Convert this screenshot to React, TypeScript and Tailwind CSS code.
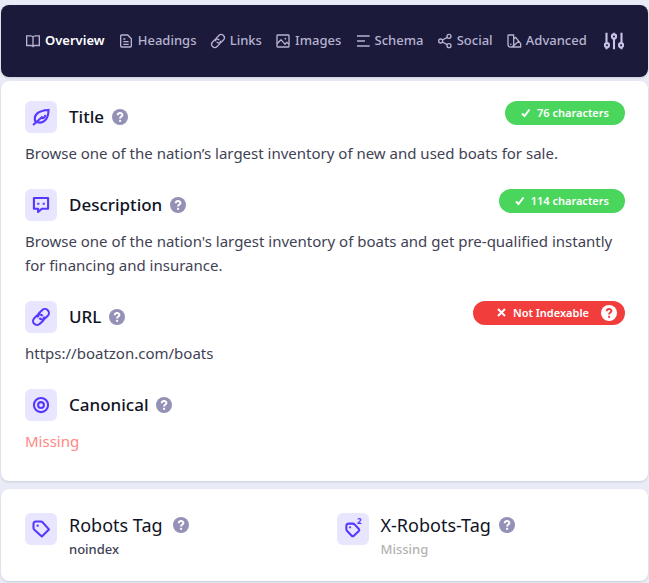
import type { ReactNode } from "react";

type IconProps = { className?: string; width?: number; children: ReactNode };

function Icon({ className = "size-4", width = 2, children }: IconProps) {
  return (
    <svg viewBox="0 0 24 24" aria-hidden="true" fill="none" stroke="currentColor" strokeWidth={width} className={`shrink-0 ${className}`}>
      {children}
    </svg>
  );
}

const linkShape = (
  <path d="M10 13.200a4.800 4.800 0 0 0 7.100.4l3-3a4.800 4.800 0 0 0-6.800-6.800L9.800 7.300a4.800 4.800 0 0 0-1 5.200M14 10.800a4.800 4.800 0 0 0-7.100-.4l-3 3a4.800 4.800 0 0 0 6.800 6.800l3.500-3.500a4.800 4.800 0 0 0 1-5.200" />
);

const tabs: { label: string; icon: ReactNode }[] = [
  { label: "Overview", icon: <path d="M12 5v15M12 6c-.8-1.300-2-1.800-3.500-1.800H2.500v14.500H9c1.500 0 2.500.4 3 1.300.5-.9 1.500-1.300 3-1.300h6.500V4.200h-6C14 4.200 12.800 4.700 12 6z" /> },
  { label: "Headings", icon: <><path d="M5.500 3h9L20 8.500V19.500a1.500 1.500 0 0 1-1.500 1.500h-13A1.500 1.500 0 0 1 4 19.500v-15A1.500 1.500 0 0 1 5.500 3z" /><path d="M8 9h3M8 13h8M8 17h8" /></> },
  { label: "Links", icon: linkShape },
  { label: "Images", icon: <><rect x="3" y="3" width="18" height="18" rx="1" /><path d="m3 16 6-6 6 7 2.500-3L21 17" /><circle cx="15.500" cy="8.500" r="1.300" fill="currentColor" stroke="none" /></> },
  { label: "Schema", icon: <path d="M3 4.500h19M3 12h12M3 19.500h19" /> },
  { label: "Social", icon: <><circle cx="5.500" cy="12" r="3" /><circle cx="18" cy="5" r="3" /><circle cx="18" cy="19" r="3" /><path d="m8 10.500 7.500-4M8 13.500l7.500 4" /></> },
  { label: "Advanced", icon: <><path d="M4 3h7.500v14a4 4 0 0 1-8.500 0V4a1 1 0 0 1 1-1zM7.500 21H22v-5L14.500 6.500l-3 2.500M11 19.500l8-7" strokeLinejoin="round" /><circle cx="7.300" cy="17" r="1.200" fill="currentColor" stroke="none" /></> },
];

function HelpButton({ label, className = "bg-[#9391b5] text-white" }: { label: string; className?: string }) {
  return (
    <button type="button" aria-label={label} className={`flex size-4 shrink-0 items-center justify-center rounded-full ${className}`}>
      <svg viewBox="0 0 16 16" aria-hidden="true" fill="none" stroke="currentColor" strokeWidth="2" className="size-4">
        <path d="M5.700 6.300C5.700 3.200 10.400 3.300 10.400 5.900 10.400 7.600 8.100 7.500 8.100 9.500" />
        <path d="M8.100 10.800v2" />
      </svg>
    </button>
  );
}

function IconTile({ children }: { children: ReactNode }) {
  return <span className="relative flex size-8 shrink-0 items-center justify-center rounded-md bg-[#e8e5ff] text-[#5438ff]">{children}</span>;
}

function CountBadge({ text }: { text: string }) {
  return (
    <span className="flex h-6 items-center gap-1.5 rounded-full bg-[#4ad65d] px-4 text-[11px] font-semibold text-white">
      <svg viewBox="0 0 10 10" aria-hidden="true" fill="none" stroke="currentColor" strokeWidth="2" className="size-2.5">
        <path d="m1 5.500 2.500 2.500L8.500 1.500" />
      </svg>
      {text}
    </span>
  );
}

function Section({ title, icon, badge, children, tone = "text-[#3f4254]" }: { title: string; icon: ReactNode; badge?: ReactNode; children: ReactNode; tone?: string }) {
  return (
    <section>
      <div className="flex h-8 items-start justify-between">
        <div className="flex items-center">
          <IconTile>{icon}</IconTile>
          <h2 className="ml-3 text-[17px] font-medium text-[#101424]">{title}</h2>
          <span className="ml-2"><HelpButton label={`About ${title}`} /></span>
        </div>
        {badge}
      </div>
      <p className={`mt-2 text-[15px] leading-6 ${tone}`}>{children}</p>
    </section>
  );
}

export default function App() {
  return (
    <main className="flex min-h-screen flex-col gap-1 bg-[#e9ecf6] px-px pt-[5px] font-['Noto_Sans',sans-serif]">
      <nav className="flex h-[72px] items-center justify-between rounded-lg bg-[#1b1a3a] px-6 text-[#b7b3d0] shadow-sm">
        {tabs.map((tab, i) => (
          <a key={tab.label} href="#" className={`flex items-center gap-1 text-[13px] ${i === 0 ? "font-semibold text-white" : "font-medium"}`}>
            <Icon className="size-4 text-[#b7b3d0]">{tab.icon}</Icon>
            {tab.label}
          </a>
        ))}
        <button type="button" aria-label="Settings" className="pl-1 text-[#c9c5ea]">
          <Icon className="size-5" width={2.5}>
            <path d="M3 2v12M3 20v2M12 2v1M12 9v13M21 2v12M21 20v2" />
            <circle cx="3.500" cy="17" r="2.500" /><circle cx="12" cy="6.500" r="2.500" /><circle cx="20.500" cy="17" r="2.500" />
          </Icon>
        </button>
      </nav>

      <div className="flex flex-col gap-6 rounded-lg bg-white pt-5 pr-[23px] pb-7 pl-6 shadow-sm">
        <Section
          title="Title"
          badge={<CountBadge text="76 characters" />}
          icon={<Icon className="size-5" width={2.5}><path d="M2.500 21.500 14 11.500M5.500 18C2 10 8.500 4 21 3.500c0 11-6 17.500-14 14.500M17 9.500c.3 2.500-1.500 4-4 4" /></Icon>}
        >
          Browse one of the nation’s largest inventory of new and used boats for sale.
        </Section>
        <Section
          title="Description"
          badge={<CountBadge text="114 characters" />}
          icon={<Icon className="size-5" width={2.5}><path d="M3.500 3.500h17v13H13L8.500 20.500v-4h-5z" strokeLinejoin="round" /><path d="M7.500 10.500h2.500M14 10.500h2.500" /></Icon>}
        >
          Browse one of the nation's largest inventory of boats and get pre-qualified instantly for financing and insurance.
        </Section>
        <Section
          title="URL"
          badge={
            <span className="flex h-6 items-center rounded-full bg-[#f23d3d] pr-2 pl-6 text-[11px] font-semibold text-white">
              <svg viewBox="0 0 10 10" aria-hidden="true" fill="none" stroke="currentColor" strokeWidth="2" className="mr-1.5 size-2.5"><path d="m1 1 7 7M8 1 1 8" /></svg>
              Not Indexable
              <span className="ml-3"><HelpButton label="Why not indexable" className="bg-white text-[#f23d3d]" /></span>
            </span>
          }
          icon={<Icon className="size-5" width={2.5}>{linkShape}</Icon>}
        >
          https://boatzon.com/boats
        </Section>
        <Section title="Canonical" tone="text-[#ff8784]" icon={<Icon className="size-5" width={2.5}><circle cx="12" cy="12" r="8.500" /><circle cx="12" cy="12" r="3.500" /></Icon>}>
          Missing
        </Section>
      </div>

      <div className="mt-1 grid grid-cols-2 gap-6 rounded-lg bg-white px-6 pt-6 pb-5 shadow-sm">
        <section className="flex">
          <IconTile>
            <Icon className="size-5" width={2.5}>
              <path d="M3 10.500V6a3 3 0 0 1 3-3h5.500c1 0 1.800.3 2.500 1l7.500 8.500-8.500 8.500L4 13c-.7-.7-1-1.500-1-2.500z" strokeLinejoin="round" />
              <circle cx="8" cy="8" r="1.400" fill="currentColor" stroke="none" />
            </Icon>
          </IconTile>
          <div className="ml-3">
            <div className="flex h-6 items-center gap-2.5">
              <h2 className="text-lg text-[#101424]">Robots Tag</h2>
              <HelpButton label="About Robots Tag" />
            </div>
            <p className="text-[13px] leading-6 font-medium text-[#3f4254]">noindex</p>
          </div>
        </section>
        <section className="flex">
          <IconTile>
            <Icon className="size-5" width={2.5}>
              <path d="M4 8.500a3 3 0 0 1 3-3h4.500c1 0 1.700.3 2.400 1l5.100 5.500c.8.900.8 1.700 0 2.500L13 20c-.9.900-1.700.9-2.600 0L5 14.500c-.7-.7-1-1.400-1-2.400z" strokeLinejoin="round" />
              <circle cx="8.500" cy="10" r="1.300" fill="currentColor" stroke="none" />
            </Icon>
            <sup className="absolute top-1 right-[7px] text-[8px] leading-none font-bold">2</sup>
          </IconTile>
          <div className="ml-3">
            <div className="flex h-6 items-center gap-2">
              <h2 className="text-lg text-[#101424]">X-Robots-Tag</h2>
              <HelpButton label="About X-Robots-Tag" />
            </div>
            <p className="text-[13px] leading-6 font-medium text-[#b3b3b3]">Missing</p>
          </div>
        </section>
      </div>
    </main>
  );
}
